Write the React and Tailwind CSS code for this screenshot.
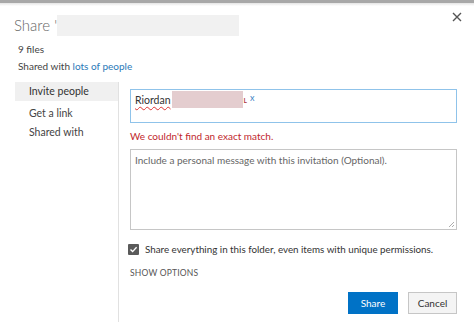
import React from 'react';

const font = { fontFamily: 'Lato, "Open Sans", sans-serif' };

function NavItem({ label, active, className = '' }) {
  return (
    <div className={`h-[19px] flex items-center pl-[14px] text-[10.5px] ${active ? 'bg-[#f0f0f0] text-[#333]' : 'text-[#444]'} ${className}`}>
      {label}
    </div>
  );
}

export default function App() {
  return (
    <div className="w-[474px] h-[334px] bg-white relative overflow-hidden" style={font}>
      <div className="h-[3px] bg-[#a8a8a8]" />
      <div className="h-[3px] bg-gradient-to-b from-[#e4e4e4] to-white" />

      <button className="absolute right-[10px] top-[10px] w-[14px] h-[14px] flex items-center justify-center">
        <svg width="10" height="10" viewBox="0 0 10 10">
          <path d="M1 1 L9 9 M9 1 L1 9" stroke="#555" strokeWidth="1.4" />
        </svg>
      </button>

      <div className="pl-[14px] pt-[9px]">
        <div className="flex items-center h-[21px]">
          <span className="text-[15px] font-light text-[#666] leading-none whitespace-pre">Share '</span>
          <span className="w-[182px] h-[21px] bg-[#f1f1f1]" />
        </div>
        <div className="pl-[4px] mt-[5px] text-[10px] text-[#444] leading-[17px]">
          <div>9 files</div>
          <div>Shared with <span className="text-[#2a7ab8]">lots of people</span></div>
        </div>
      </div>

      <div className="flex mt-[7px]">
        <div className="ml-[15px] w-[104px] h-[240px] border-r border-[#e1e1e1]">
          <NavItem label="Invite people" active />
          <NavItem label="Get a link" className="mt-[3px]" />
          <NavItem label="Shared with" />
        </div>

        <div className="pl-[11px] pt-[7px] w-[339px]">
          <div className="w-[327px] h-[34px] border border-[#8fc3ea] flex items-start pl-[4px] pt-[1px]">
            <span className="text-[10.5px] text-[#333] leading-[16px] mt-[1px] underline decoration-wavy decoration-[#d33] decoration-1 underline-offset-2">Riordan</span>
            <span className="ml-[1px] w-[71px] h-[17px] bg-[#e4cdcf]" />
            <span className="text-[9px] text-[#a33] leading-[16px] mt-[1px] ml-[1px]">ʟ</span>
            <span className="text-[9px] text-[#3b82c4] leading-[16px] mt-[-1px] ml-[3px]">x</span>
          </div>
          <div className="mt-[6px] text-[10px] text-[#c1272d] leading-[14px]">We couldn't find an exact match.</div>

          <div className="mt-[6px] w-[327px] h-[81px] border border-[#c6c6c6] relative px-[4px] pt-[3px] text-[10px] text-[#666]">
            Include a personal message with this invitation (Optional).
            <svg className="absolute right-[1px] bottom-[1px]" width="7" height="7" viewBox="0 0 7 7">
              <path d="M6 1 L1 6 M6 4 L4 6" stroke="#999" strokeWidth="0.8" />
            </svg>
          </div>

          <div className="mt-[12px] flex items-center -ml-[2px]">
            <svg className="shrink-0" width="11" height="11" viewBox="0 0 11 11">
              <rect x="0" y="0" width="11" height="11" rx="1" fill="#5a5a5a" />
              <path d="M2.5 5.5 L4.6 7.6 L8.6 3.2" stroke="white" strokeWidth="1.4" fill="none" />
            </svg>
            <span className="ml-[6px] text-[9.8px] text-[#333] whitespace-nowrap">Share everything in this folder, even items with unique permissions.</span>
          </div>

          <div className="mt-[10px] text-[8.5px] text-[#555] tracking-[0.2px]">SHOW OPTIONS</div>

          <div className="mt-[13px] w-[327px] flex justify-end gap-[10px]">
            <button className="w-[50px] h-[22px] bg-[#0072c6] text-white text-[10px]">Share</button>
            <button className="w-[49px] h-[22px] bg-[#f4f4f4] border border-[#c6c6c6] text-[#333] text-[10px]">Cancel</button>
          </div>
        </div>
      </div>
    </div>
  );
}
